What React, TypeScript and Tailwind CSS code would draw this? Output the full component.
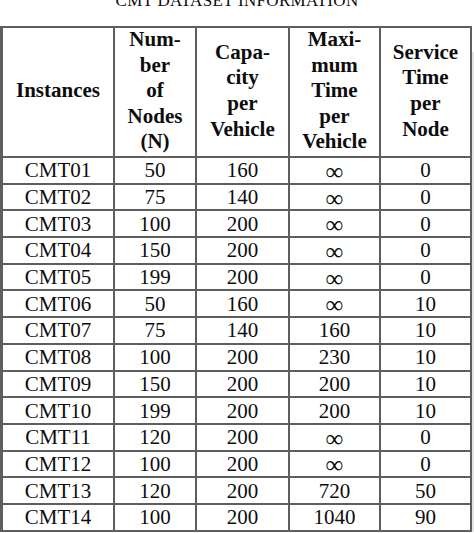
import React from "react";

const header: string[][] = [
  ["Instances"],
  ["Num-", "ber", "of", "Nodes", "(N)"],
  ["Capa-", "city", "per", "Vehicle"],
  ["Maxi-", "mum", "Time", "per", "Vehicle"],
  ["Service", "Time", "per", "Node"],
];

const INF = "∞";

const rows: string[][] = [
  ["CMT01", "50", "160", INF, "0"],
  ["CMT02", "75", "140", INF, "0"],
  ["CMT03", "100", "200", INF, "0"],
  ["CMT04", "150", "200", INF, "0"],
  ["CMT05", "199", "200", INF, "0"],
  ["CMT06", "50", "160", INF, "10"],
  ["CMT07", "75", "140", "160", "10"],
  ["CMT08", "100", "200", "230", "10"],
  ["CMT09", "150", "200", "200", "10"],
  ["CMT10", "199", "200", "200", "10"],
  ["CMT11", "120", "200", INF, "0"],
  ["CMT12", "100", "200", INF, "0"],
  ["CMT13", "120", "200", "720", "50"],
  ["CMT14", "100", "200", "1040", "90"],
];

export default function App() {
  return (
    <div className="w-[474px] h-[533px] bg-white overflow-hidden font-['Liberation_Serif',serif] text-[#0d0d0d]">
      <div className="h-[26px] overflow-hidden">
        <div className="mt-[-8px] text-center text-[17px] leading-[17px] tracking-[0.3px] uppercase">
          CMT Dataset Information
        </div>
      </div>
      <div className="flex">
        <div className="w-[472px] border-t-2 border-l-[3px] border-[#5e5e5e] grid grid-cols-[112px_82px_93px_91px_91px] grid-rows-[130px_repeat(14,26.7px)]">
          {header.map((lines, i) => (
            <div
              key={"h" + i}
              className="border-r-2 border-b-2 border-[#5e5e5e] flex flex-col items-center justify-center font-bold text-[21px] leading-[25.6px] pb-[2px]"
            >
              {lines.map((l, j) => (
                <span key={j}>{l}</span>
              ))}
            </div>
          ))}
          {rows.map((r, ri) =>
            r.map((c, ci) => (
              <div
                key={ri + "-" + ci}
                className="border-r-2 border-b-2 border-[#5e5e5e] flex items-center justify-center text-[21px] leading-[20px]"
              >
                {c === INF ? (
                  <span className="text-[25px] leading-[18px] mt-[3px]">{c}</span>
                ) : (
                  <span>{c}</span>
                )}
              </div>
            ))
          )}
        </div>
        <div className="w-[2px] mt-[26px] bg-[#e4e4e4]" />
      </div>
    </div>
  );
}
